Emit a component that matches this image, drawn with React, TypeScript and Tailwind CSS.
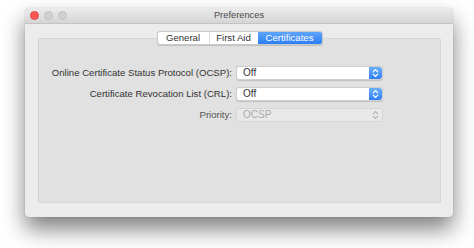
const font = { fontFamily: '"Liberation Sans", Arial, sans-serif' };

function Stepper({ disabled }: { disabled?: boolean }) {
  return (
    <div
      className={`w-[13px] h-full flex items-center justify-center rounded-r-[3px] ${
        disabled ? '' : 'bg-gradient-to-b from-[#6aaefb] to-[#2f7ff5]'
      }`}
    >
      <svg width="7" height="10" viewBox="0 0 7 10" fill="none">
        <path
          d="M1.2 3.8 L3.5 1.5 L5.8 3.8 M1.2 6.2 L3.5 8.5 L5.8 6.2"
          stroke={disabled ? '#b4b4b4' : '#ffffff'}
          strokeWidth="1.1"
          strokeLinecap="round"
          strokeLinejoin="round"
        />
      </svg>
    </div>
  );
}

function Row({ label, value, disabled }: { label: string; value: string; disabled?: boolean }) {
  return (
    <div className="flex items-center h-[13px]">
      <div className={`w-[193px] text-right text-[9.6px] leading-none ${disabled ? 'text-[#555]' : 'text-[#333]'}`}>
        {label}
      </div>
      <div
        className={`ml-[4px] w-[147px] h-[14px] flex items-center rounded-[3px] border ${
          disabled ? 'bg-[#e9e9e9] border-[#d6d6d6]' : 'bg-white border-[#cfcfcf] shadow-[0_0.5px_1px_rgba(0,0,0,0.15)]'
        }`}
      >
        <span className={`flex-1 pl-[6px] text-[10px] leading-none ${disabled ? 'text-[#a9a9a9]' : 'text-[#333]'}`}>
          {value}
        </span>
        <Stepper disabled={disabled} />
      </div>
    </div>
  );
}

export default function App() {
  const tabs = ['General', 'First Aid', 'Certificates'];
  return (
    <div className="w-[474px] h-[248px] bg-white pl-[25px] pt-[8px] overflow-hidden" style={font}>
      <div className="w-[428px] h-[209px] bg-[#ececec] rounded-[4px] flex flex-col shadow-[0_12px_22px_rgba(0,0,0,0.5),0_0_1px_rgba(0,0,0,0.35)]">
        <div className="relative h-[16px] flex items-center justify-center rounded-t-[4px] bg-gradient-to-b from-[#ebebeb] to-[#d5d5d5] border-b border-[#c4c4c4]">
          <div className="absolute left-[5px] top-[3px] flex gap-[5px]">
            <span className="w-[9px] h-[9px] rounded-full bg-[#fc5753] border border-[#df4744]" />
            <span className="w-[9px] h-[9px] rounded-full bg-[#d0d0d0] border border-[#c2c2c2]" />
            <span className="w-[9px] h-[9px] rounded-full bg-[#d0d0d0] border border-[#c2c2c2]" />
          </div>
          <span className="text-[9.3px] leading-none text-[#4a4a4a]">Preferences</span>
        </div>
        <div className="flex-1 flex flex-col pt-[7px] pb-[14px] pl-[13px] pr-[12px]">
          <div className="relative z-10 flex justify-center">
            <div className="flex h-[14px] rounded-[3px] border border-[#c9c9c9] bg-white shadow-[0_0.5px_1px_rgba(0,0,0,0.15)] text-[9.6px] leading-none text-[#333]">
              {tabs.map((t, i) => (
                <div
                  key={t}
                  className={`flex items-center justify-center ${
                    i === 0 ? 'w-[51px]' : i === 1 ? 'w-[49px] border-l border-[#dcdcdc]' : 'w-[64px] rounded-r-[2px] bg-gradient-to-b from-[#5ea4fb] to-[#2c7ef5] text-white'
                  }`}
                >
                  {t}
                </div>
              ))}
            </div>
          </div>
          <div className="-mt-[7px] flex-1 bg-[#e1e1e1] border border-[#d6d6d6] rounded-[2px] pt-[27px] flex flex-col gap-[8px]">
            <Row label="Online Certificate Status Protocol (OCSP):" value="Off" />
            <Row label="Certificate Revocation List (CRL):" value="Off" />
            <Row label="Priority:" value="OCSP" disabled />
          </div>
        </div>
      </div>
    </div>
  );
}
